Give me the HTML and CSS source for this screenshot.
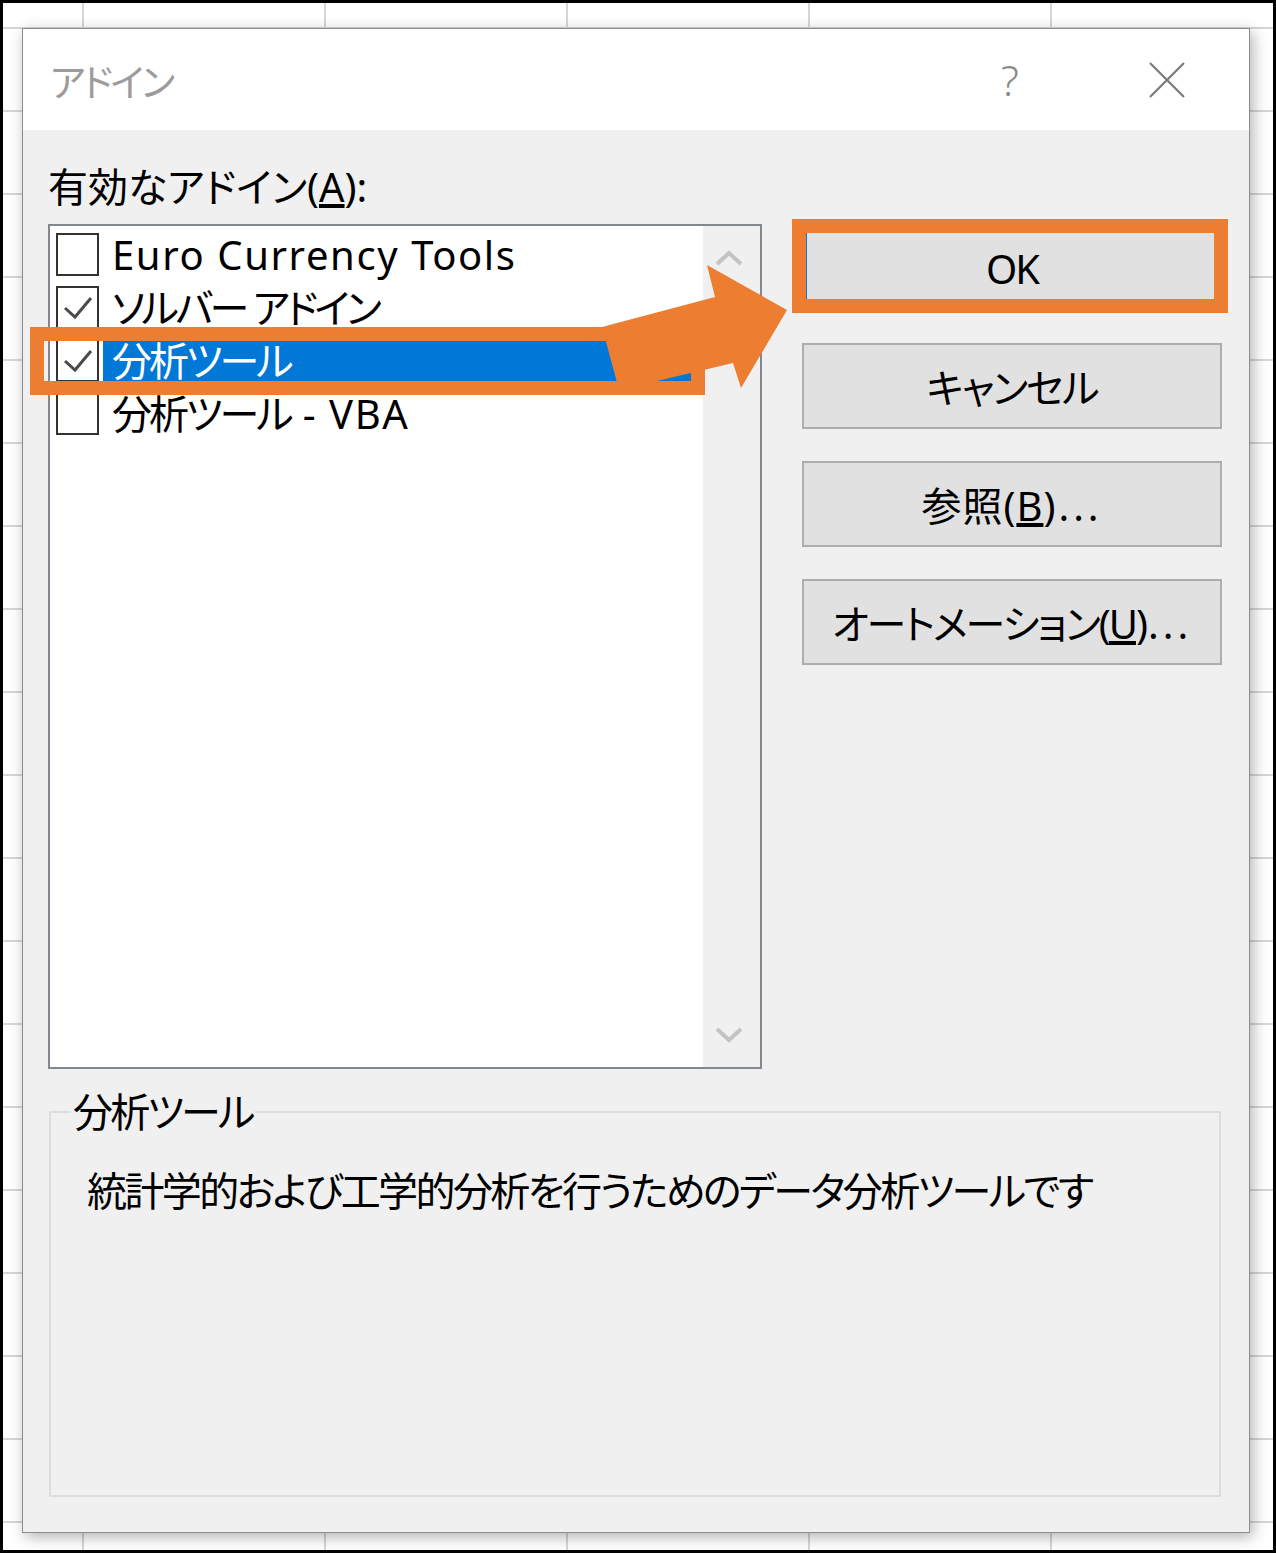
FILE: index.html
```html
<!DOCTYPE html>
<html lang="ja">
  <head>
    <meta charset="utf-8">
    <title>アドイン</title>
    <link rel="stylesheet" href="styles.css">
  </head>
  <body>
    <div class="screen">

      <div class="dialog">
        <div class="titlebar">
          <span class="title">アドイン</span>
          <div class="controls">
            <span class="help">?</span>
            <svg class="close" width="36" height="36" viewBox="0 0 36 36">
              <path d="M1 1 L35 35 M35 1 L1 35" stroke="#7a7a7a" stroke-width="2.2" fill="none"/>
            </svg>
          </div>
        </div>

        <div class="content">
          <div class="caption">有効なアドイン(<u>A</u>):</div>

          <div class="main">
            <div class="listbox">
              <div class="items">
                <div class="item">
                  <span class="checkbox"></span>
                  <span class="label latin">Euro Currency Tools</span>
                </div>
                <div class="item">
                  <span class="checkbox checked">
                    <svg width="39" height="39" viewBox="0 0 39 39"><path d="M7 20 L17 29 L33 10" stroke="#4a4a4a" stroke-width="3" fill="none"/></svg>
                  </span>
                  <span class="label narrow">ソルバー アドイン</span>
                </div>
                <div class="item">
                  <span class="checkbox checked">
                    <svg width="39" height="39" viewBox="0 0 39 39"><path d="M7 20 L17 29 L33 10" stroke="#4a4a4a" stroke-width="3" fill="none"/></svg>
                  </span>
                  <span class="label selected">分析ツール</span>
                </div>
                <div class="item">
                  <span class="checkbox"></span>
                  <span class="label">分析ツール<span class="latin"> - VBA</span></span>
                </div>
              </div>
              <div class="scrollbar">
                <svg width="28" height="16" viewBox="0 0 28 16"><path d="M2 14 L14 3 L26 14" stroke="#c3c3c3" stroke-width="4" fill="none"/></svg>
                <svg width="28" height="16" viewBox="0 0 28 16"><path d="M2 2 L14 13 L26 2" stroke="#c3c3c3" stroke-width="4" fill="none"/></svg>
              </div>
            </div>

            <div class="buttons">
              <button class="btn btn-default">OK</button>
              <button class="btn">キャンセル</button>
              <button class="btn btn-spaced">参照(<u>B</u>)<span class="dots">...</span></button>
              <button class="btn">オートメーション(<u>U</u>)<span class="dots">...</span></button>
            </div>
          </div>

          <fieldset class="group">
            <legend>分析ツール</legend>
            <p class="desc">統計学的および工学的分析を行うためのデータ分析ツールです</p>
          </fieldset>
        </div>
      </div>

      <!-- orange callouts drawn over the screenshot -->
      <svg class="marks" width="1276" height="1553" viewBox="0 0 1276 1553">
        <polygon points="602,327 715,297 707,265 787,310 741,388 733,363 619,390" fill="#ed7d31"/>
        <rect x="37" y="334" width="661" height="54" fill="none" stroke="#ed7d31" stroke-width="14"/>
        <rect x="799" y="226" width="422" height="80" fill="none" stroke="#ed7d31" stroke-width="14"/>
      </svg>

    </div>
  </body>
</html>
```

FILE: styles.css
```css
html, body {
  margin: 0;
  padding: 0;
}

* {
  box-sizing: border-box;
  font-family: "Noto Sans", "Noto Sans CJK JP", sans-serif;
  font-feature-settings: "palt";
}

.screen {
  position: relative;
  width: 1276px;
  height: 1553px;
  border: 3px solid #000;
  padding: 25px 0 0 19px;
  background-color: #fff;
  background-image:
    linear-gradient(to right, #d6d6d6 2px, transparent 2px),
    linear-gradient(to bottom, #d6d6d6 2px, transparent 2px);
  background-size: 242px 100%, 100% 83px;
  background-position: 79px 0, 0 24px;
  overflow: hidden;
}

.dialog {
  width: 1228px;
  height: 1505px;
  border: 1px solid #8c8c8c;
  background: #f0f0f0;
  display: flex;
  flex-direction: column;
  box-shadow: 3px 4px 14px rgba(0, 0, 0, 0.3);
}

.titlebar {
  height: 101px;
  background: #fff;
  display: flex;
  align-items: center;
  padding: 0 64px 0 27px;
}

.title {
  font-size: 38px;
  color: #9c9c9c;
  letter-spacing: -2.5px;
}

.controls {
  margin-left: auto;
  display: flex;
  align-items: center;
  gap: 119px;
}

.help {
  width: 40px;
  text-align: center;
  font-size: 42px;
  color: #8a8a8a;
  font-weight: 300;
}

.close {
  display: block;
}

.content {
  flex: 1;
  display: flex;
  flex-direction: column;
  padding: 33px 27px 35px 25px;
}

.caption {
  font-size: 40px;
  line-height: 48px;
  color: #000;
}

.main {
  display: flex;
  gap: 40px;
  margin-top: 13px;
}

.listbox {
  width: 714px;
  height: 845px;
  border: 2px solid #828790;
  background: #fff;
  display: flex;
}

.items {
  flex: 1;
  padding: 2px 0 0 6px;
}

.item {
  height: 53px;
  display: flex;
  align-items: center;
}

.checkbox {
  width: 43px;
  height: 43px;
  border: 2px solid #333;
  background: #fff;
  flex-shrink: 0;
}

.checkbox svg {
  display: block;
}

.label {
  flex: 1;
  height: 40px;
  margin-left: 4px;
  padding-left: 9px;
  font-size: 40px;
  line-height: 40px;
  color: #000;
  white-space: nowrap;
  letter-spacing: -3px;
}

.label.narrow {
  letter-spacing: -3.5px;
}

.latin,
.label.latin {
  letter-spacing: 1.6px;
}

.label.selected {
  background: #0078d7;
  color: #fff;
}

.scrollbar {
  width: 57px;
  background: #f0f0f0;
  display: flex;
  flex-direction: column;
  justify-content: space-between;
  align-items: center;
  padding: 24px 6px 24px 0;
}

.scrollbar svg {
  display: block;
}

.buttons {
  display: flex;
  flex-direction: column;
  gap: 32px;
  margin-top: 1px;
}

.btn {
  width: 420px;
  height: 86px;
  border: 2px solid #adadad;
  background: #e1e1e1;
  font-size: 40px;
  color: #000;
  padding: 0;
  letter-spacing: -2px;
}

.btn-spaced {
  letter-spacing: 1px;
}

.btn .dots {
  letter-spacing: 4px;
  margin-left: 2px;
}

.btn-default {
  border-color: #0078d7;
  box-shadow: inset 3px 0 0 #0078d7;
}

.group {
  flex: 1;
  margin: 19px 1px 0 1px;
  border: 2px solid #dcdcdc;
  padding: 0 0 0 20px;
}

.group legend {
  padding: 0 2px;
  font-size: 40px;
  line-height: 48px;
  color: #000;
  letter-spacing: -2.8px;
}

.desc {
  margin: 31px 0 0 16px;
  font-size: 40px;
  line-height: 48px;
  color: #000;
  letter-spacing: -2.6px;
}

.marks {
  position: absolute;
  top: -3px;
  left: -3px;
  pointer-events: none;
}
```
